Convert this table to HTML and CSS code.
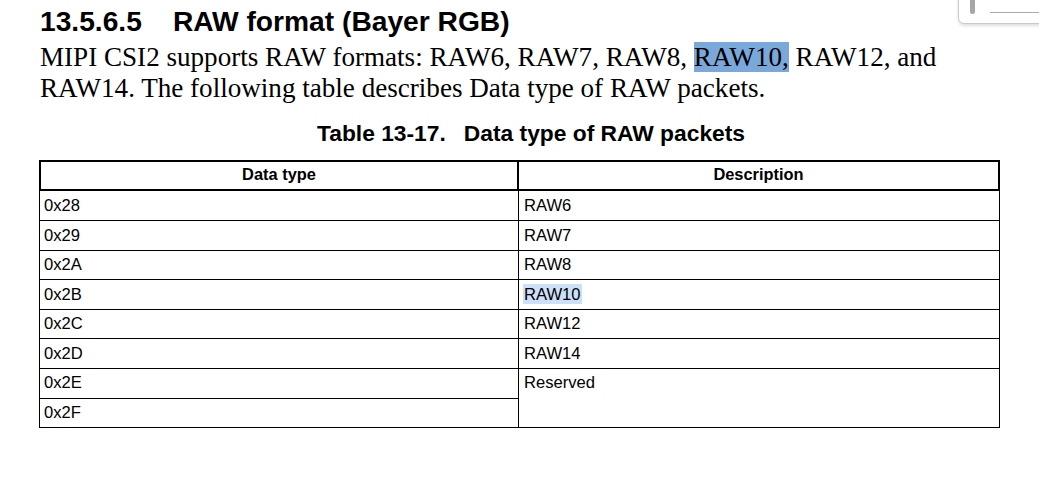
FILE: index.html
```html
<!DOCTYPE html>
<html lang="en">
<head>
<meta charset="utf-8">
<title>RAW format (Bayer RGB)</title>
<link rel="stylesheet" href="styles.css">
</head>
<body>
<div class="page">
  <h1 class="title"><span class="num">13.5.6.5</span>RAW format (Bayer RGB)</h1>
  <p class="para">MIPI CSI2 supports RAW formats: RAW6, RAW7, RAW8, <span class="sel">RAW10,</span> RAW12, and RAW14. The following table describes Data type of RAW packets.</p>
  <div class="caption"><span class="cap-num">Table 13-17.</span>Data type of RAW packets</div>
  <table class="dt">
    <thead>
      <tr><th class="c1">Data type</th><th class="c2">Description</th></tr>
    </thead>
    <tbody>
      <tr><td class="c1">0x28</td><td class="c2">RAW6</td></tr>
      <tr><td class="c1">0x29</td><td class="c2">RAW7</td></tr>
      <tr><td class="c1">0x2A</td><td class="c2">RAW8</td></tr>
      <tr><td class="c1">0x2B</td><td class="c2"><span class="sel2">RAW10</span></td></tr>
      <tr><td class="c1">0x2C</td><td class="c2">RAW12</td></tr>
      <tr><td class="c1">0x2D</td><td class="c2">RAW14</td></tr>
      <tr><td class="c1">0x2E</td><td class="c2" rowspan="2">Reserved</td></tr>
      <tr><td class="c1">0x2F</td></tr>
    </tbody>
  </table>
</div>
<div class="toolbar">
  <div class="grip"></div>
  <div class="rule"></div>
</div>
</body>
</html>
```

FILE: styles.css
```css
html, body {
  margin: 0;
  padding: 0;
  background: #ffffff;
}
body {
  width: 1039px;
  height: 487px;
  overflow: hidden;
  position: relative;
  color: #000;
}
.page {
  padding: 5px 0 0 40px;
}
.title {
  margin: 0;
  font-family: "Liberation Sans", Arial, sans-serif;
  font-weight: bold;
  font-size: 28.2px;
  line-height: 32px;
  white-space: nowrap;
}
.title .num {
  margin-right: 31px;
}
.para {
  margin: 5px 0 0 0;
  width: 960px;
  font-family: "Liberation Serif", "Times New Roman", serif;
  font-size: 27.1px;
  line-height: 30.7px;
}
.sel {
  background: #7aa8da;
}
.caption {
  margin-top: 17px;
  width: 961px;
  text-align: center;
  font-family: "Liberation Sans", Arial, sans-serif;
  font-weight: bold;
  font-size: 22.8px;
  line-height: 26px;
  padding-left: 21px;
  box-sizing: border-box;
  white-space: nowrap;
}
.cap-num {
  margin-right: 18px;
}
.dt {
  margin-top: 14px;
  margin-left: -1px;
  border-spacing: 0;
  border-collapse: separate;
  width: 961px;
  table-layout: fixed;
  font-family: "Liberation Sans", Arial, sans-serif;
  font-size: 16.6px;
}
.dt th {
  font-weight: bold;
  font-size: 16.4px;
  line-height: 19px;
  padding: 3px 0 5px 0;
  text-align: center;
  border-top: 2px solid #000;
  border-bottom: 2px solid #000;
  border-right: 2px solid #000;
}
.dt th.c1 {
  border-left: 2px solid #000;
  width: 476px;
}
.dt td {
  line-height: 19px;
  height: 29.6px;
  box-sizing: border-box;
  padding: 4.5px 0 5px 4px;
  border-bottom: 1px solid #000;
  border-right: 1px solid #000;
  vertical-align: top;
  text-align: left;
}
.dt td.c1 {
  border-left: 1px solid #000;
}
.dt td.c2 {
  padding-left: 5px;
}
.sel2 {
  background: #cce0f9;
  padding: 1px 1px 0 1px;
  margin-left: -1px;
}
.toolbar {
  position: absolute;
  left: 958px;
  top: -10px;
  width: 100px;
  height: 32px;
  border: 1px solid #c9c9c9;
  border-radius: 6px;
  background: #ffffff;
  box-shadow: 0 2px 3px rgba(0, 0, 0, 0.12);
}
.grip {
  position: absolute;
  left: 11px;
  top: 0;
  width: 5px;
  height: 23px;
  border-radius: 0 0 3px 3px;
  background: #a6a6a6;
}
.rule {
  position: absolute;
  left: 31px;
  top: 21px;
  width: 70px;
  height: 1px;
  background: #a9a9a9;
}
```
